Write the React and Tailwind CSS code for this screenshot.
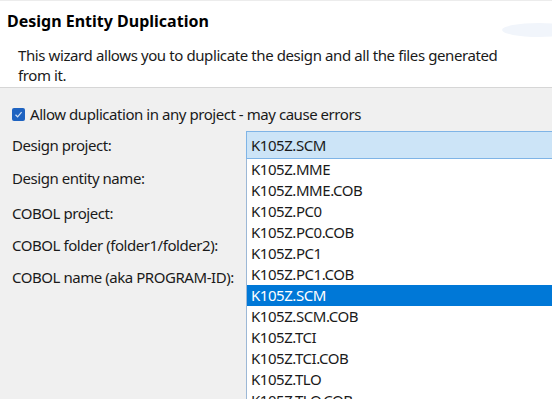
import React from 'react';

const items = [
  'K105Z.MME',
  'K105Z.MME.COB',
  'K105Z.PC0',
  'K105Z.PC0.COB',
  'K105Z.PC1',
  'K105Z.PC1.COB',
  'K105Z.SCM',
  'K105Z.SCM.COB',
  'K105Z.TCI',
  'K105Z.TCI.COB',
  'K105Z.TLO',
  'K105Z.TLO.COB',
];

const labels = [
  ['Design entity name:', 'mt-[9px]'],
  ['COBOL project:', 'mt-[15px]'],
  ['COBOL folder (folder1/folder2):', 'mt-[12px]'],
  ['COBOL name (aka PROGRAM-ID):', 'mt-[12px]'],
];

export default function App() {
  return (
    <div className="relative w-[552px] h-[399px] overflow-hidden bg-[#f0f0f0] text-[15px] tracking-[-0.45px] text-[#1a1a1a] font-['Noto_Sans',sans-serif]">
      {/* banner */}
      <div className="relative h-[88px] bg-white border-t border-[#ececec] border-b border-b-[#d6d6d6] overflow-hidden">
        <div className="absolute right-[-24px] top-[22px] w-[74px] h-[14px] rounded-[50%] bg-[#f1f5fb]" />
        <h1 className="relative pl-[7px] pt-[9px] text-[16px] tracking-normal font-bold text-black leading-[22px]">Design Entity Duplication</h1>
        <p className="relative pl-[18px] pt-[13px] leading-[20px] tracking-[-0.4px]">
          This wizard allows you to duplicate the design and all the files generated
          <br />
          from it.
        </p>
      </div>

      {/* form */}
      <div className="pl-[12px] pt-[16px]">
        <label className="flex items-center gap-[5px] h-[20px]">
          <span className="w-[13px] h-[13px] rounded-[2px] bg-[#1e63c1] flex items-center justify-center">
            <svg width="9" height="9" viewBox="0 0 9 9">
              <path d="M1.5 4.8 L3.6 6.8 L7.6 2.2" fill="none" stroke="#cfe0f5" strokeWidth="1.2" />
            </svg>
          </span>
          <span>Allow duplication in any project - may cause errors</span>
        </label>

        <div className="flex items-center mt-[7px] h-[28px]">
          <span className="w-[234px]">Design project:</span>
          <div className="flex-1 h-[28px] bg-[#cce4f7] border border-[#7fb4e6] border-r-0 pl-[4px] flex items-center">
            K105Z.SCM
          </div>
        </div>

        {labels.map(([l, m]) => (
          <div key={l} className={`h-[20px] leading-[20px] ${m}`}>{l}</div>
        ))}
      </div>

      {/* dropdown popup */}
      <div className="absolute left-[246px] top-[159px] right-0 bg-white border-l border-[#9cb8d6]">
        {items.map((it) => (
          <div
            key={it}
            className={`h-[21px] leading-[21px] pl-[4px] ${it === 'K105Z.SCM' ? 'bg-[#0078d7] text-white' : ''}`}
          >
            {it}
          </div>
        ))}
      </div>
    </div>
  );
}
